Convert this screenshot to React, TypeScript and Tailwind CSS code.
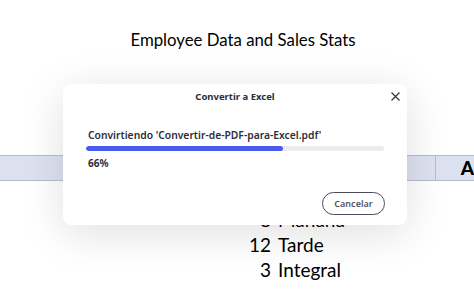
import React from 'react';

const rows = [
  { n: 8, label: 'Mañana' },
  { n: 12, label: 'Tarde' },
  { n: 3, label: 'Integral' },
  { n: 0, label: '' },
];

export default function App() {
  const progress = 66;

  return (
    <div className="relative w-[474px] h-[291px] overflow-hidden bg-white" style={{ fontFamily: 'Lato, "Noto Sans", sans-serif' }}>
      {/* Background sheet */}
      <div className="flex flex-col">
        <h1 className="pt-[28px] h-[56px] pl-[12px] text-center text-[16.8px] leading-[24px] text-black">
          Employee Data and Sales Stats
        </h1>
        <div className="mt-[99px] h-[26px] flex border-y border-[#b9bcc4] bg-[#dde2f1]">
          <div className="w-[437px] border-r border-[#b9bcc4]" />
          <div className="pl-[25px] text-[19px] leading-[24px] font-black text-black">A</div>
        </div>
        <div className="mt-[26px] flex flex-col">
          {rows.map((r, i) => (
            <div key={i} className="h-[25px] flex items-center text-[19px] leading-[24px] text-black">
              <span className="w-[271px] text-right">{r.label ? r.n : ''}</span>
              <span className="pl-[7px]">{r.label}</span>
            </div>
          ))}
        </div>
      </div>

      {/* Modal */}
      <div
        className="absolute left-[63px] top-[84px] w-[344px] h-[141px] rounded-[8px] bg-white shadow-[0_8px_44px_rgba(0,0,0,0.13)] flex flex-col"
        style={{ fontFamily: '"Noto Sans", "Open Sans", sans-serif' }}
      >
        <div className="relative h-[19px] flex items-end justify-center">
          <span className="text-[9.5px] font-bold text-[#2d2d3a] leading-[12px]">Convertir a Excel</span>
          <button className="absolute right-[7px] top-[8px] text-[#333]">
            <svg width="9" height="9" viewBox="0 0 9 9" fill="none" stroke="currentColor" strokeWidth="1.2">
              <path d="M0.5 0.5L8.5 8.5M8.5 0.5L0.5 8.5" />
            </svg>
          </button>
        </div>
        <div className="px-[23px] pt-[25px] flex flex-col">
          <p className="pl-[2px] text-[10.3px] font-semibold leading-[14px] text-[#2e2e3a]">
            Convirtiendo 'Convertir-de-PDF-para-Excel.pdf'
          </p>
          <div className="mt-[4px] h-[5px] w-[298px] rounded-full bg-[#ebebf0] overflow-hidden">
            <div className="h-full rounded-full bg-[#4a5bf0]" style={{ width: `${progress}%` }} />
          </div>
          <p className="pl-[2px] mt-[6px] text-[10px] font-bold leading-[13px] text-[#2e2e3a]">{progress}%</p>
        </div>
        <div className="mt-auto mb-[10px] pr-[22px] flex justify-end">
          <button className="w-[63px] h-[23px] rounded-full border-[1.5px] border-[#4c4c5a] text-[9px] font-semibold text-[#55555f]">
            Cancelar
          </button>
        </div>
      </div>
    </div>
  );
}
